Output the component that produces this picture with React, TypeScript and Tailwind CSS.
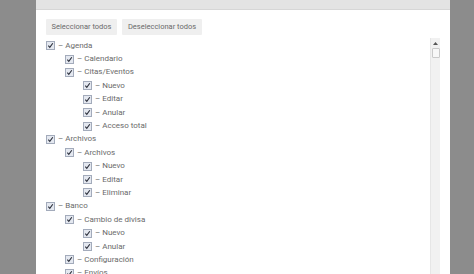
import React from "react";

type Row = { label: string; level: number };

const rows: Row[] = [
  { label: "Agenda", level: 0 },
  { label: "Calendario", level: 1 },
  { label: "Citas/Eventos", level: 1 },
  { label: "Nuevo", level: 2 },
  { label: "Editar", level: 2 },
  { label: "Anular", level: 2 },
  { label: "Acceso total", level: 2 },
  { label: "Archivos", level: 0 },
  { label: "Archivos", level: 1 },
  { label: "Nuevo", level: 2 },
  { label: "Editar", level: 2 },
  { label: "Eliminar", level: 2 },
  { label: "Banco", level: 0 },
  { label: "Cambio de divisa", level: 1 },
  { label: "Nuevo", level: 2 },
  { label: "Anular", level: 2 },
  { label: "Configuración", level: 1 },
  { label: "Envíos", level: 1 },
];

const pad = ["pl-[6px]", "pl-[25px]", "pl-[43px]"];

function Check() {
  return (
    <svg width="9" height="9" viewBox="0 0 9 9" className="shrink-0">
      <rect x="0.5" y="0.5" width="8" height="8" fill="#e4e8f0" stroke="#a3abbb" />
      <path d="M2.3 4.6 L3.8 6.3 L6.8 2.2" fill="none" stroke="#2b2f3a" strokeWidth="1.1" />
    </svg>
  );
}

export default function App() {
  return (
    <div
      className="w-[474px] h-[274px] bg-[#8c8c8c] overflow-hidden flex pl-[36px] pr-[24px]"
      style={{ fontFamily: "Roboto, 'Liberation Sans', sans-serif" }}
    >
      <div className="flex-1 bg-white flex flex-col">
        <div className="h-[10px] bg-[#e3e3e3] border-b border-[#d6d6d6] shrink-0" />
        <div className="flex gap-[5px] pl-[10px] pt-[9px] shrink-0">
          <button className="h-[16px] bg-[#efefef] text-[7.5px] text-[#6a6a6a] rounded-[1px] w-[71px] whitespace-nowrap flex items-center justify-center">
            Seleccionar todos
          </button>
          <button className="h-[16px] bg-[#efefef] text-[7.5px] text-[#6a6a6a] rounded-[1px] w-[80px] whitespace-nowrap flex items-center justify-center">
            Deseleccionar todos
          </button>
        </div>
        <div className="flex pt-[3px] pr-[10px] flex-1 min-h-0 overflow-hidden">
          <div className="flex-1 flex flex-col pl-[4px] pt-[1px]">
            {rows.map((r, i) => (
              <div
                key={i}
                className={`h-[13.4px] flex items-center gap-[3px] shrink-0 ${pad[r.level]}`}
              >
                <Check />
                <span className="text-[8px] text-[#6a6a6a] leading-none whitespace-nowrap">
                  – {r.label}
                </span>
              </div>
            ))}
          </div>
          <div className="w-[10px] bg-[#f1f1f1] border-l border-[#e6e6e6] flex flex-col items-center shrink-0">
            <div className="h-[10px] flex items-center justify-center">
              <svg width="5" height="3" viewBox="0 0 5 3">
                <path d="M0 3 L2.5 0 L5 3 Z" fill="#555" />
              </svg>
            </div>
            <div className="w-[8px] h-[10px] bg-[#f7f7f7] border border-[#c9c9c9] rounded-[1px]" />
          </div>
        </div>
      </div>
    </div>
  );
}
